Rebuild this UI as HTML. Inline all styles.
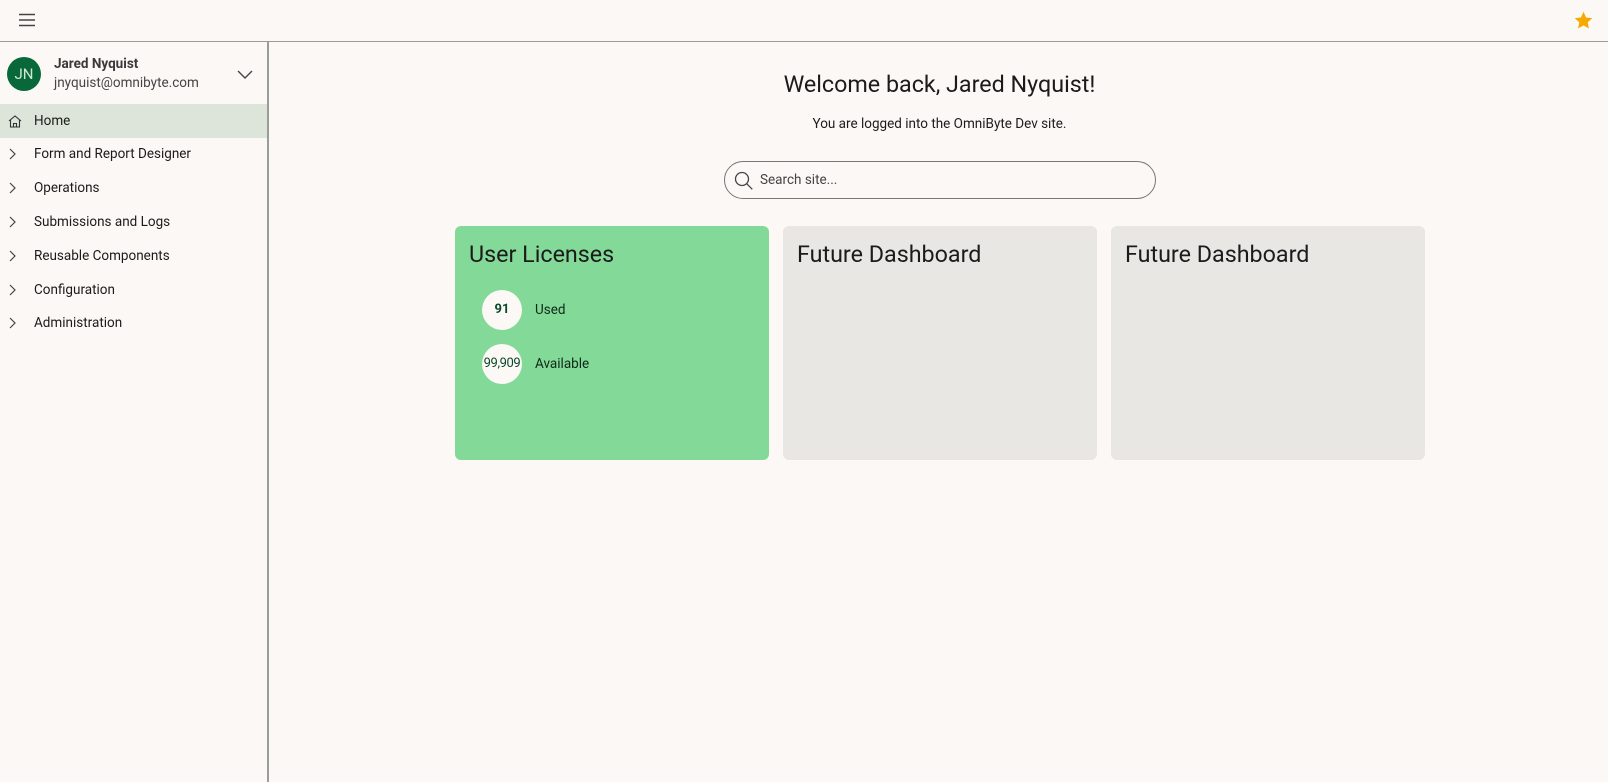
<!DOCTYPE html>
<html><head><meta charset="utf-8"><style>
*{box-sizing:border-box;margin:0;padding:0}
body{width:1608px;height:782px;background:#fcf8f5;font-family:"Roboto","Liberation Sans",sans-serif;color:#1c1b1b;position:relative;overflow:hidden}
.top{position:absolute;left:0;top:0;width:1608px;height:42px;border-bottom:1px solid #9a9c98}
.side{position:absolute;left:0;top:42px;width:269px;height:740px;border-right:2px solid #9a9c98}
.av{position:absolute;left:7px;top:15px;width:34px;height:34px;border-radius:50%;background:#08683a;color:#cfe9d6;font-size:15px;text-align:center;line-height:34px}
.nm{position:absolute;left:54px;top:14px;font-size:13.5px;font-weight:bold;color:#3a3a3a}
.em{position:absolute;left:54px;top:33px;font-size:13.5px;color:#444}
.item{position:absolute;left:0;width:267px;height:34px;font-size:13.5px;line-height:34px;padding-left:34px}
.item svg{position:absolute;left:8px;top:11px}
.card{position:absolute;top:226px;width:314px;height:234px;border-radius:6px;background:#e8e7e3}
.card h2{position:absolute;left:14px;top:14px;font-weight:normal;font-size:23.3px}
.circ{position:absolute;left:27px;width:40px;height:40px;border-radius:50%;background:#fcf8f5;color:#0a4a2a;font-size:13px;font-weight:bold;text-align:center;line-height:40px}
.lbl{position:absolute;left:80px;font-size:13.5px;color:#102818}
</style></head><body>
<div class="top">
<svg style="position:absolute;left:19px;top:13px" width="16" height="14"><path d="M0 1.5h16M0 7h16M0 12.5h16" stroke="#444" stroke-width="1.4"/></svg>
<svg style="position:absolute;left:1573px;top:10px" width="21" height="21" viewBox="0 0 24 24"><path d="M12 2l3 6.5 7 .8-5.2 4.8 1.4 7L12 17.6 5.8 21.1l1.4-7L2 9.3l7-.8z" fill="#f6aa00"/></svg>
</div>
<div class="side">
<div class="av">JN</div>
<div class="nm">Jared Nyquist</div>
<div class="em">jnyquist@omnibyte.com</div>
<svg style="position:absolute;left:237px;top:28px" width="16" height="10"><path d="M1 1l7 7 7-7" fill="none" stroke="#444" stroke-width="1.4"/></svg>
<div class="item" style="top:62px;background:#dde5da"><svg width="14" height="13" viewBox="0 0 14 13"><path d="M1 6L7 1l6 5M2.5 5v7h9V5M5.5 12V8.5h3V12" fill="none" stroke="#333" stroke-width="1.1"/></svg>Home</div>
<div class="item" style="top:95px"><svg width="8" height="12"><path d="M2 1l5 5-5 5" fill="none" stroke="#444" stroke-width="1.2"/></svg>Form and Report Designer</div>
<div class="item" style="top:129px"><svg width="8" height="12"><path d="M2 1l5 5-5 5" fill="none" stroke="#444" stroke-width="1.2"/></svg>Operations</div>
<div class="item" style="top:163px"><svg width="8" height="12"><path d="M2 1l5 5-5 5" fill="none" stroke="#444" stroke-width="1.2"/></svg>Submissions and Logs</div>
<div class="item" style="top:197px"><svg width="8" height="12"><path d="M2 1l5 5-5 5" fill="none" stroke="#444" stroke-width="1.2"/></svg>Reusable Components</div>
<div class="item" style="top:231px"><svg width="8" height="12"><path d="M2 1l5 5-5 5" fill="none" stroke="#444" stroke-width="1.2"/></svg>Configuration</div>
<div class="item" style="top:264px"><svg width="8" height="12"><path d="M2 1l5 5-5 5" fill="none" stroke="#444" stroke-width="1.2"/></svg>Administration</div>
</div>
<div style="position:absolute;left:271px;width:1337px;top:70px;text-align:center;font-size:23.3px">Welcome back, Jared Nyquist!</div>
<div style="position:absolute;left:271px;width:1337px;top:116px;text-align:center;font-size:13.5px">You are logged into the OmniByte Dev site.</div>
<div style="position:absolute;left:724px;top:161px;width:432px;height:38px;border:1px solid #777;border-radius:19px">
<svg style="position:absolute;left:9px;top:9px" width="20" height="20"><circle cx="8" cy="8" r="6.5" fill="none" stroke="#444" stroke-width="1.3"/><path d="M12.8 12.8l5.5 5.5" stroke="#444" stroke-width="1.3"/></svg>
<span style="position:absolute;left:35px;top:10px;font-size:13.5px;color:#444">Search site...</span></div>
<div class="card" style="left:455px;background:#83d997"><h2>User Licenses</h2>
<div class="circ" style="top:64px">91</div><div class="lbl" style="top:76px">Used</div>
<div class="circ" style="top:118px;letter-spacing:-.4px;font-weight:normal">99,909</div><div class="lbl" style="top:130px">Available</div></div>
<div class="card" style="left:783px"><h2>Future Dashboard</h2></div>
<div class="card" style="left:1111px"><h2>Future Dashboard</h2></div>
</body></html>
